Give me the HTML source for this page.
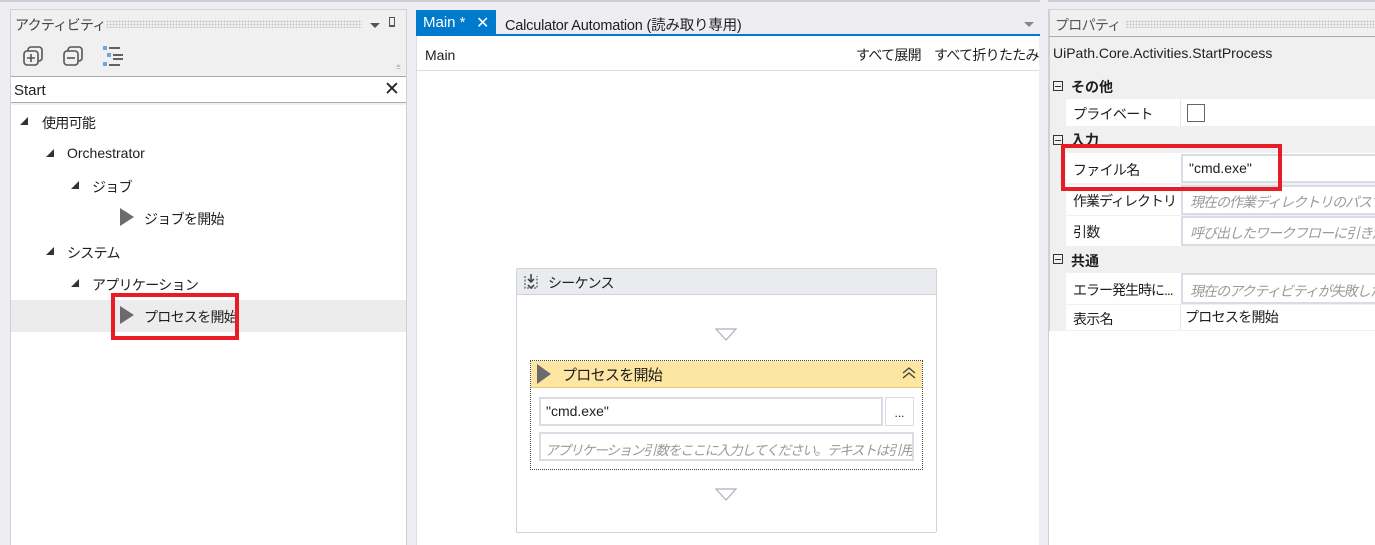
<!DOCTYPE html>
<html><head><meta charset="utf-8"><style>
*{margin:0;padding:0;box-sizing:border-box}
body{width:1375px;height:545px;overflow:hidden;background:#eeeef2;font-family:"Liberation Sans","Noto Sans CJK JP",sans-serif;font-size:14px;color:#1e1e1e;position:relative}
.a{position:absolute}
.j{letter-spacing:-0.7px}
.tri{width:0;height:0;border-left:14px solid #6b6b6b;border-top:9px solid transparent;border-bottom:9px solid transparent}
.exp{width:0;height:0;border-right:8px solid #333;border-top:8px solid transparent}
.dots{background-image:radial-gradient(#c8c8c8 0.8px,transparent 0.9px);background-size:3px 3px}
.box{width:10px;height:10px;border:1px solid #333;font-size:0}
.box:after{content:"";position:absolute;left:1px;top:4px;width:6px;height:1px;background:#333}
.red{border:4px solid #e81c24}
.ph{color:#9a9a9a;font-style:italic}
</style></head><body>
<div class="a" style="left:0;top:0;width:1375px;height:2px;background:#cfcfd4"></div>

<!-- LEFT PANEL -->
<div class="a" style="left:10px;top:9px;width:397px;height:536px;background:#f0f0f0;border:1px solid #cfcfd4"></div>
<div class="a dots" style="left:100px;top:20px;width:262px;height:8px"></div>
<div class="a j" style="left:15px;top:15px;font-size:14px;color:#444;background:#f0f0f0">アクティビティ</div>
<div class="a" style="left:370px;top:23px;border-top:5px solid #555;border-left:5px solid transparent;border-right:5px solid transparent"></div>
<div class="a" style="left:389px;top:17px;width:6px;height:10px;border:1px solid #555;border-bottom:2px solid #555"></div>
<svg class="a" style="left:22px;top:46px" width="24" height="22" viewBox="0 0 24 22"><rect x="6" y="1" width="14" height="14" rx="3" fill="none" stroke="#555" stroke-width="1.6"/><rect x="2" y="5" width="14" height="14" rx="3" fill="#f0f0f0" stroke="#555" stroke-width="1.6"/><path d="M9 8v8M5 12h8" stroke="#555" stroke-width="1.6"/></svg>
<svg class="a" style="left:62px;top:46px" width="24" height="22" viewBox="0 0 24 22"><rect x="6" y="1" width="14" height="14" rx="3" fill="none" stroke="#555" stroke-width="1.6"/><rect x="2" y="5" width="14" height="14" rx="3" fill="#f0f0f0" stroke="#555" stroke-width="1.6"/><path d="M5 12h8" stroke="#555" stroke-width="1.6"/></svg>
<svg class="a" style="left:102px;top:45px" width="24" height="24" viewBox="0 0 24 24"><rect x="1" y="1" width="4" height="4" fill="#6fa3e6"/><rect x="5" y="8" width="4" height="4" fill="#6fa3e6"/><rect x="1" y="17" width="4" height="4" fill="#6fa3e6"/><path d="M7 3h11M11 10h10M11 14h10M7 20h11" stroke="#333" stroke-width="1.5"/></svg>
<div class="a" style="left:396px;top:62px;font-size:8px;color:#999">⩧</div>
<div class="a" style="left:11px;top:76px;width:395px;height:27px;background:#fff;border-top:1px solid #aaa;border-bottom:1px solid #aaa"></div>
<div class="a" style="left:14px;top:82px;font-size:15px">Start</div>
<div class="a" style="left:384px;top:78px;font-size:19px;color:#222">✕</div>
<div class="a" style="left:11px;top:105px;width:395px;height:440px;background:#fff"></div>
<div class="a" style="left:11px;top:300px;width:395px;height:32px;background:#ececec"></div>
<div class="a exp" style="left:20px;top:117px"></div><div class="a j" style="left:42px;top:113px">使用可能</div>
<div class="a exp" style="left:46px;top:149px"></div><div class="a" style="left:67px;top:145px">Orchestrator</div>
<div class="a exp" style="left:71px;top:181px"></div><div class="a j" style="left:92px;top:177px">ジョブ</div>
<div class="a tri" style="left:120px;top:208px"></div><div class="a j" style="left:144px;top:209px">ジョブを開始</div>
<div class="a exp" style="left:46px;top:247px"></div><div class="a j" style="left:67px;top:243px">システム</div>
<div class="a exp" style="left:71px;top:279px"></div><div class="a j" style="left:92px;top:275px">アプリケーション</div>
<div class="a tri" style="left:120px;top:306px"></div><div class="a j" style="left:144px;top:307px">プロセスを開始</div>
<div class="a red" style="left:111px;top:293px;width:128px;height:47px"></div>

<!-- CENTER -->
<div class="a" style="left:416px;top:10px;width:80px;height:25px;background:#007acc"></div>
<div class="a" style="left:423px;top:14px;color:#fff;font-size:15px">Main *</div>
<div class="a" style="left:476px;top:13px;color:#fff;font-size:16px">✕</div>
<div class="a" style="left:505px;top:14px;font-size:14.5px;letter-spacing:-0.2px">Calculator Automation (読み取り専用)</div>
<div class="a" style="left:1024px;top:22px;border-top:5px solid #888;border-left:5px solid transparent;border-right:5px solid transparent"></div>
<div class="a" style="left:416px;top:34px;width:624px;height:2px;background:#007acc"></div>
<div class="a" style="left:416px;top:36px;width:623px;height:509px;background:#fff;border-left:1px solid #ddd"></div>
<div class="a" style="left:416px;top:70px;width:623px;height:1px;background:#ddd"></div>
<div class="a" style="left:425px;top:47px">Main</div>
<div class="a j" style="left:856px;top:45px">すべて展開</div>
<div class="a j" style="left:934px;top:45px">すべて折りたたみ</div>
<div class="a" style="left:1040px;top:0;width:8px;height:545px;background:#eeeef2"></div>
<div class="a" style="left:516px;top:268px;width:421px;height:265px;border:1px solid #cfd3da;border-radius:2px;background:#fff"></div>
<div class="a" style="left:517px;top:269px;width:419px;height:26px;background:#e9ebee;border-bottom:1px solid #cfd3da"></div>
<svg class="a" style="left:522px;top:273px" width="18" height="18" viewBox="0 0 18 18"><path d="M3 3v12h12V3" fill="none" stroke="#666" stroke-width="1.3" stroke-dasharray="2 1.5"/><path d="M9 1v8M6 6l3 3 3-3M6 12l3 3 3-3" fill="none" stroke="#444" stroke-width="1.6"/></svg>
<div class="a j" style="left:548px;top:273px">シーケンス</div>
<svg class="a" style="left:715px;top:328px" width="22" height="14"><path d="M1 1h20L11 12z" fill="#fff" stroke="#a9b0bb" stroke-width="1.2"/></svg>
<svg class="a" style="left:715px;top:488px" width="22" height="14"><path d="M1 1h20L11 12z" fill="#fff" stroke="#a9b0bb" stroke-width="1.2"/></svg>
<div class="a" style="left:530px;top:360px;width:393px;height:110px;border:1px dotted #444;background:#fff"></div>
<div class="a" style="left:531px;top:361px;width:391px;height:27px;background:#fde6a1;border-bottom:1px solid #e8c87a"></div>
<div class="a tri" style="left:537px;top:364px;border-top-width:10px;border-bottom-width:10px"></div>
<div class="a j" style="left:562px;top:364px;font-size:15px">プロセスを開始</div>
<svg class="a" style="left:902px;top:367px" width="14" height="12"><path d="M1 6l6-5 6 5M1 11l6-5 6 5" fill="none" stroke="#444" stroke-width="1.4"/></svg>
<div class="a" style="left:539px;top:397px;width:344px;height:29px;border:2px solid #d8dce4"></div>
<div class="a" style="left:546px;top:403px">"cmd.exe"</div>
<div class="a" style="left:885px;top:397px;width:29px;height:29px;border:1px solid #d8dce4;text-align:center;font-size:12px;line-height:30px">...</div>
<div class="a" style="left:539px;top:432px;width:375px;height:29px;border:2px solid #d8dce4;overflow:hidden;white-space:nowrap"><span class="ph j" style="position:relative;left:4px;top:5px;font-size:13.5px;letter-spacing:-1.2px">アプリケーション引数をここに入力してください。テキストは引用符</span></div>

<!-- RIGHT -->
<div class="a" style="left:1048px;top:9px;width:327px;height:536px;background:#f0f0f0;border-left:2px solid #cfcfd4;border-top:1px solid #cfcfd4"></div>
<div class="a dots" style="left:1120px;top:20px;width:255px;height:8px"></div>
<div class="a j" style="left:1055px;top:15px;color:#555;background:#f0f0f0;padding-right:4px">プロパティ</div>
<div class="a" style="left:1049px;top:36px;width:326px;height:1px;background:#aaa"></div>
<div class="a" style="left:1053px;top:45px">UiPath.Core.Activities.StartProcess</div>
<div class="a" style="left:1049px;top:331px;width:326px;height:214px;background:#fff"></div>
<div class="a box" style="left:1053px;top:81px"></div><div class="a" style="left:1071px;top:77px;font-weight:bold">その他</div>
<div class="a box" style="left:1053px;top:135px"></div><div class="a" style="left:1071px;top:130px;font-weight:bold">入力</div>
<div class="a box" style="left:1053px;top:254px"></div><div class="a" style="left:1071px;top:251px;font-weight:bold">共通</div>
<div class="a" style="left:1066px;top:99px;width:309px;height:27px;background:#fff"></div>
<div class="a" style="left:1180px;top:99px;width:1px;height:27px;background:#e6e6e6"></div>
<div class="a j" style="left:1073px;top:104px">プライベート</div>
<div class="a" style="left:1187px;top:104px;width:18px;height:18px;border:1px solid #666;background:#fff"></div>
<div class="a" style="left:1066px;top:153px;width:309px;height:30px;background:#fff"></div>
<div class="a j" style="left:1073px;top:160px">ファイル名</div>
<div class="a" style="left:1181px;top:154px;width:194px;height:29px;border:2px solid #d8dce4;border-right:none"></div>
<div class="a" style="left:1189px;top:160px">"cmd.exe"</div>
<div class="a" style="left:1066px;top:185px;width:309px;height:30px;background:#fff"></div>
<div class="a j" style="left:1073px;top:191px;letter-spacing:-1px">作業ディレクトリ</div>
<div class="a" style="left:1181px;top:185px;width:194px;height:30px;border:2px solid #d8dce4;border-right:none;overflow:hidden;white-space:nowrap"><span class="ph j" style="position:relative;left:7px;top:5px;letter-spacing:-1px">現在の作業ディレクトリのパスで</span></div>
<div class="a" style="left:1066px;top:216px;width:309px;height:30px;background:#fff"></div>
<div class="a j" style="left:1073px;top:222px">引数</div>
<div class="a" style="left:1181px;top:216px;width:194px;height:30px;border:2px solid #d8dce4;border-right:none;overflow:hidden;white-space:nowrap"><span class="ph j" style="position:relative;left:7px;top:5px;letter-spacing:-1px">呼び出したワークフローに引き渡さ</span></div>
<div class="a" style="left:1066px;top:273px;width:309px;height:31px;background:#fff"></div>
<div class="a j" style="left:1073px;top:280px;letter-spacing:-1px">エラー発生時に...</div>
<div class="a" style="left:1181px;top:273px;width:194px;height:31px;border:2px solid #d8dce4;border-right:none;overflow:hidden;white-space:nowrap"><span class="ph j" style="position:relative;left:7px;top:6px;letter-spacing:-1px">現在のアクティビティが失敗したと</span></div>
<div class="a" style="left:1066px;top:305px;width:309px;height:25px;background:#fff"></div>
<div class="a" style="left:1180px;top:305px;width:1px;height:25px;background:#e6e6e6"></div>
<div class="a j" style="left:1073px;top:309px">表示名</div>
<div class="a j" style="left:1185px;top:307px">プロセスを開始</div>
<div class="a red" style="left:1061px;top:144px;width:221px;height:47px"></div>
</body></html>
